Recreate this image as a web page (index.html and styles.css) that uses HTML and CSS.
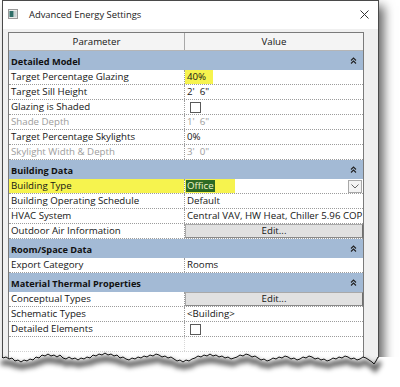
FILE: index.html
```html
<!DOCTYPE html>
<html>
<head>
<meta charset="utf-8">
<title>Advanced Energy Settings</title>
<link rel="stylesheet" href="styles.css">
</head>
<body>
<div class="stage">
  <div class="window">
    <div class="titlebar">
      <svg class="appicon" width="10" height="10" viewBox="0 0 10 10">
        <rect x="0.5" y="0.5" width="9" height="9" fill="#e8e8e8" stroke="#9a9a9a"/>
        <rect x="1.5" y="2" width="4" height="6" fill="#2f6e68"/>
        <rect x="6" y="2" width="2.5" height="6" fill="#c9d3d3"/>
      </svg>
      <span class="title">Advanced Energy Settings</span>
      <svg class="close" width="9" height="9" viewBox="0 0 9 9">
        <path d="M0.5 0.5 L8.5 8.5 M8.5 0.5 L0.5 8.5" stroke="#333" stroke-width="1" fill="none"/>
      </svg>
    </div>
    <div class="client">
      <div class="grid">
        <div class="row head"><div class="cell">Parameter</div><div class="cell">Value</div></div>

        <div class="group"><span>Detailed Model</span><svg class="chev" width="7" height="7" viewBox="0 0 7 7"><path d="M1 3.5 L3.5 1 L6 3.5 M1 6.5 L3.5 4 L6 6.5" stroke="#222" stroke-width="1.1" fill="none"/></svg></div>
        <div class="row"><div class="cell">Target Percentage Glazing</div><div class="cell hl-short">40%</div></div>
        <div class="row"><div class="cell">Target Sill Height</div><div class="cell">2'&nbsp; 6"</div></div>
        <div class="row"><div class="cell">Glazing is Shaded</div><div class="cell"><span class="check"></span></div></div>
        <div class="row off"><div class="cell">Shade Depth</div><div class="cell">1'&nbsp; 6"</div></div>
        <div class="row"><div class="cell">Target Percentage Skylights</div><div class="cell">0%</div></div>
        <div class="row off"><div class="cell">Skylight Width &amp; Depth</div><div class="cell">3'&nbsp; 0"</div></div>

        <div class="group"><span>Building Data</span><svg class="chev" width="7" height="7" viewBox="0 0 7 7"><path d="M1 3.5 L3.5 1 L6 3.5 M1 6.5 L3.5 4 L6 6.5" stroke="#222" stroke-width="1.1" fill="none"/></svg></div>
        <div class="row"><div class="cell hl-full">Building Type</div><div class="cell hl-part"><span class="sel">Office</span><span class="drop"><svg width="8" height="5" viewBox="0 0 8 5"><path d="M0.5 0.5 L4 4 L7.5 0.5" stroke="#666" stroke-width="1" fill="none"/></svg></span></div></div>
        <div class="row"><div class="cell">Building Operating Schedule</div><div class="cell">Default</div></div>
        <div class="row"><div class="cell">HVAC System</div><div class="cell">Central VAV, HW Heat, Chiller 5.96 COP</div></div>
        <div class="row"><div class="cell">Outdoor Air Information</div><div class="cell btncell"><span class="btn">Edit...</span></div></div>

        <div class="group"><span>Room/Space Data</span><svg class="chev" width="7" height="7" viewBox="0 0 7 7"><path d="M1 3.5 L3.5 1 L6 3.5 M1 6.5 L3.5 4 L6 6.5" stroke="#222" stroke-width="1.1" fill="none"/></svg></div>
        <div class="row"><div class="cell">Export Category</div><div class="cell">Rooms</div></div>

        <div class="group"><span>Material Thermal Properties</span><svg class="chev" width="7" height="7" viewBox="0 0 7 7"><path d="M1 3.5 L3.5 1 L6 3.5 M1 6.5 L3.5 4 L6 6.5" stroke="#222" stroke-width="1.1" fill="none"/></svg></div>
        <div class="row"><div class="cell">Conceptual Types</div><div class="cell btncell"><span class="btn">Edit...</span></div></div>
        <div class="row"><div class="cell">Schematic Types</div><div class="cell">&lt;Building&gt;</div></div>
        <div class="row"><div class="cell">Detailed Elements</div><div class="cell"><span class="check"></span></div></div>
        <div class="row faint"><div class="cell"></div><div class="cell"></div></div>
        <div class="filler"></div>
      </div>
    </div>
  </div>
  <svg class="torn" width="400" height="42" viewBox="0 0 400 42">
    <defs>
      <filter id="blur" x="-5%" y="-100%" width="110%" height="300%"><feGaussianBlur stdDeviation="2.4"/></filter>
    </defs>
    <polygon fill="#ffffff" points="0,12 3,13 6,12 9,14 12,13 15,16 18,15 21,17 24,15 27,16 30,14 33,15 36,12 39,13 42,10 45,11 48,9 51,11 54,10 57,12 60,10 63,13 66,14 69,12 72,14 75,13 78,15 81,13 84,14 87,12 90,13 93,10 96,11 99,9 102,10 105,8 108,10 111,9 114,11 117,10 120,13 123,12 126,14 129,15 132,13 135,14 138,12 141,13 144,11 147,12 150,10 153,11 156,9 159,10 162,12 165,11 168,13 171,12 174,14 177,16 180,15 183,17 186,15 189,16 192,14 195,13 198,11 201,12 204,10 207,11 210,9 213,11 216,10 219,12 222,11 225,13 228,12 231,14 234,13 237,12 240,10 243,11 246,9 249,10 252,12 255,11 258,13 261,15 264,14 267,16 270,15 273,13 276,14 279,12 282,13 285,11 288,12 291,14 294,13 297,15 300,14 303,12 306,13 309,11 312,12 315,14 318,13 321,15 324,14 327,16 330,15 333,13 336,14 339,12 342,13 345,11 348,12 351,14 354,13 357,15 360,14 363,12 366,13 369,15 372,17 374,19 376,16 379,12 400,12 400,42 0,42"/>
    <polyline filter="url(#blur)" transform="translate(1,5)" fill="none" stroke="#000" stroke-opacity="0.65" stroke-width="5" points="0,12 3,13 6,12 9,14 12,13 15,16 18,15 21,17 24,15 27,16 30,14 33,15 36,12 39,13 42,10 45,11 48,9 51,11 54,10 57,12 60,10 63,13 66,14 69,12 72,14 75,13 78,15 81,13 84,14 87,12 90,13 93,10 96,11 99,9 102,10 105,8 108,10 111,9 114,11 117,10 120,13 123,12 126,14 129,15 132,13 135,14 138,12 141,13 144,11 147,12 150,10 153,11 156,9 159,10 162,12 165,11 168,13 171,12 174,14 177,16 180,15 183,17 186,15 189,16 192,14 195,13 198,11 201,12 204,10 207,11 210,9 213,11 216,10 219,12 222,11 225,13 228,12 231,14 234,13 237,12 240,10 243,11 246,9 249,10 252,12 255,11 258,13 261,15 264,14 267,16 270,15 273,13 276,14 279,12 282,13 285,11 288,12 291,14 294,13 297,15 300,14 303,12 306,13 309,11 312,12 315,14 318,13 321,15 324,14 327,16 330,15 333,13 336,14 339,12 342,13 345,11 348,12 351,14 354,13 357,15 360,14 363,12 366,13 369,15 372,17 374,19 376,16 379,12"/>
    <polyline fill="none" stroke="#111" stroke-width="1" points="2,12 3,13 6,12 9,14 12,13 15,16 18,15 21,17 24,15 27,16 30,14 33,15 36,12 39,13 42,10 45,11 48,9 51,11 54,10 57,12 60,10 63,13 66,14 69,12 72,14 75,13 78,15 81,13 84,14 87,12 90,13 93,10 96,11 99,9 102,10 105,8 108,10 111,9 114,11 117,10 120,13 123,12 126,14 129,15 132,13 135,14 138,12 141,13 144,11 147,12 150,10 153,11 156,9 159,10 162,12 165,11 168,13 171,12 174,14 177,16 180,15 183,17 186,15 189,16 192,14 195,13 198,11 201,12 204,10 207,11 210,9 213,11 216,10 219,12 222,11 225,13 228,12 231,14 234,13 237,12 240,10 243,11 246,9 249,10 252,12 255,11 258,13 261,15 264,14 267,16 270,15 273,13 276,14 279,12 282,13 285,11 288,12 291,14 294,13 297,15 300,14 303,12 306,13 309,11 312,12 315,14 318,13 321,15 324,14 327,16 330,15 333,13 336,14 339,12 342,13 345,11 348,12 351,14 354,13 357,15 360,14 363,12 366,13 369,15 372,17 374,19 376,16 378,12"/>
  </svg>
</div>
</body>
</html>
```

FILE: styles.css
```css
html, body {
  margin: 0;
  padding: 0;
  background: #ffffff;
}

.stage {
  position: relative;
  width: 400px;
  height: 387px;
  overflow: hidden;
  font-family: "Open Sans", "Noto Sans", "Liberation Sans", sans-serif;
  font-size: 9.7px;
  color: #151515;
}

.window {
  margin-left: 2px;
  width: 375px;
  height: 380px;
  border: 1px solid #4a4a4a;
  background: #f0f0f0;
  box-shadow: 5px 6px 10px rgba(0, 0, 0, 0.6);
  display: flex;
  flex-direction: column;
}

.titlebar {
  height: 28px;
  background: #ffffff;
  display: flex;
  align-items: center;
  padding-left: 5px;
  padding-right: 9px;
}

.appicon {
  display: block;
  margin-top: -2px;
}

.title {
  margin-left: 11px;
  font-size: 9.4px;
  color: #222;
  flex: 1;
  margin-top: -1px;
}

.close {
  display: block;
  margin-top: -2px;
}

.client {
  flex: 1;
  padding: 3px 14px 0 5px;
  display: flex;
  flex-direction: column;
}

.grid {
  flex: 1;
  border: 1px solid #7a7a7a;
  border-bottom: none;
  background: #ffffff;
  display: flex;
  flex-direction: column;
}

.row {
  display: grid;
  grid-template-columns: 175px minmax(0, 1fr);
  height: 15px;
  box-sizing: border-box;
  border-bottom: 1px dotted #9c9c9c;
}

.cell {
  padding-left: 2px;
  line-height: 14px;
  white-space: nowrap;
  overflow: hidden;
  display: flex;
  align-items: center;
  min-width: 0;
}

.cell + .cell {
  border-left: 1px dotted #9c9c9c;
}

.row.head {
  height: 18px;
  background: #f4f4f4;
  border-bottom: 1px solid #b5b5b5;
}

.row.head .cell {
  justify-content: center;
  line-height: 17px;
  padding-left: 0;
}

.row.head .cell + .cell {
  border-left: 1px solid #a8a8a8;
}

.row.off {
  color: #9d9d9d;
}

.row.faint {
  border-bottom-color: #d0d0d0;
}

.row.faint .cell + .cell {
  border-left-color: #d8d8d8;
}

.filler {
  flex: 1;
  background: #ffffff;
}

.group {
  height: 19px;
  background: #a3bad5;
  display: flex;
  align-items: center;
  justify-content: space-between;
  padding: 2px 6px 0 2px;
  box-sizing: border-box;
  font-weight: 700;
  font-size: 9.2px;
  color: #111;
}

.chev {
  display: block;
  margin-top: -3px;
}

.check {
  display: block;
  width: 9px;
  height: 9px;
  border: 1px solid #5a5a5a;
  background: #fff;
  margin-left: 3px;
}

.hl-short {
  background: linear-gradient(to right, #f6f34e 0, #f6f34e 28px, transparent 28px);
}

.hl-full {
  background: #f6f34e;
}

.hl-part {
  background: linear-gradient(to right, #f6f34e 0, #f6f34e 50px, transparent 50px);
  padding-right: 1px;
}

.sel {
  background: #2d6a25;
  color: #f4f4c8;
  line-height: 12px;
  padding: 0 1px;
  margin-left: -1px;
}

.drop {
  margin-left: auto;
  flex: none;
  width: 12px;
  height: 11px;
  border: 1px solid #a8a8a8;
  background: #f3f3f3;
  display: flex;
  align-items: center;
  justify-content: center;
}

.drop svg {
  display: block;
}

.btncell {
  padding: 0;
}

.btn {
  flex: 1;
  align-self: stretch;
  display: flex;
  align-items: center;
  justify-content: center;
  background: #e1e1e1;
  border: 1px solid #a9a9a9;
  border-right-color: #6f6f6f;
  border-bottom-color: #8a8a8a;
  line-height: 12px;
}

.torn {
  position: absolute;
  left: 0;
  top: 345px;
  display: block;
}
```
